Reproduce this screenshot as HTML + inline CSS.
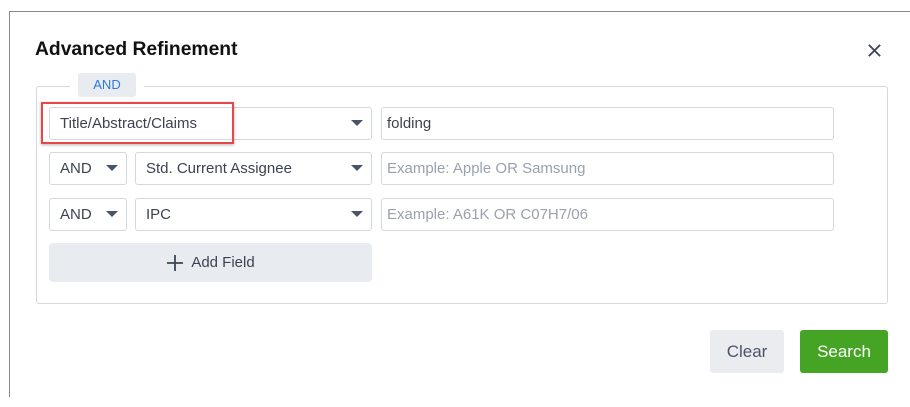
<!DOCTYPE html>
<html><head><meta charset="utf-8"><style>
*{box-sizing:border-box;margin:0;padding:0}
body{width:910px;height:407px;background:#fff;position:relative;overflow:hidden;font-family:"Liberation Sans",Arial,sans-serif;}
.a{position:absolute}
.box{position:absolute;border:1px solid #d3d7de;border-radius:3px;background:#fff;font-size:15px;color:#3c4250;display:flex;align-items:center;padding-left:10px}
.car{position:absolute;right:8px;top:12px;width:0;height:0;border-left:6px solid transparent;border-right:6px solid transparent;border-top:6px solid #4a5468}
.ph{color:#9aa1ad}
</style></head><body>
<div class="a" style="left:9px;top:11px;width:901px;height:1px;background:#888"></div>
<div class="a" style="left:9px;top:11px;width:1px;height:386px;background:#888"></div>
<div class="a" style="left:35px;top:39px;font-size:19.3px;font-weight:bold;color:#111">Advanced Refinement</div>
<svg class="a" style="left:867px;top:43px" width="15" height="15" viewBox="0 0 16 16"><path d="M2 2L14 14M14 2L2 14" stroke="#3d4656" stroke-width="2"/></svg>
<div class="a" style="left:36px;top:86px;width:852px;height:218px;border:1px solid #d3d7de;border-radius:3px"></div>
<div class="a" style="left:70px;top:80px;width:74px;height:12px;background:#fff"></div>
<div class="a" style="left:78px;top:73px;width:58px;height:24px;background:#e8ebf0;border-radius:3px;color:#2d7bd6;font-size:13px;text-align:center;line-height:24px">AND</div>

<div class="box" style="left:49px;top:107px;width:323px;height:33px">Title/Abstract/Claims<span class="car"></span></div>
<div class="box" style="left:381px;top:107px;width:453px;height:33px;padding-left:5px">folding</div>
<div class="a" style="left:41px;top:102px;width:193px;height:42px;border:2px solid #e8474a;box-shadow:0 1px 3px rgba(0,0,0,.3)"></div>

<div class="box" style="left:49px;top:152px;width:78px;height:33px">AND<span class="car"></span></div>
<div class="box" style="left:135px;top:152px;width:237px;height:33px">Std. Current Assignee<span class="car"></span></div>
<div class="box ph" style="left:381px;top:152px;width:453px;height:33px;padding-left:5px">Example: Apple OR Samsung</div>

<div class="box" style="left:49px;top:198px;width:78px;height:33px">AND<span class="car"></span></div>
<div class="box" style="left:135px;top:198px;width:237px;height:33px">IPC<span class="car"></span></div>
<div class="box ph" style="left:381px;top:198px;width:453px;height:33px;padding-left:5px">Example: A61K OR C07H7/06</div>

<div class="a" style="left:49px;top:243px;width:323px;height:39px;background:#e8ebf0;border-radius:4px;display:flex;align-items:center;justify-content:center;font-size:15px;color:#3c4250">
<svg width="18" height="18" viewBox="0 0 18 18" style="margin-right:7px"><path d="M9 1V17M1 9H17" stroke="#3d4656" stroke-width="1.8"/></svg>Add Field</div>

<div class="a" style="left:710px;top:330px;width:74px;height:43px;background:#eaecf0;border-radius:3px;color:#4a5468;font-size:17px;text-align:center;line-height:43px">Clear</div>
<div class="a" style="left:800px;top:330px;width:88px;height:43px;background:#46a424;border-radius:3px;color:#fff;font-size:17px;text-align:center;line-height:43px">Search</div>
</body></html>
